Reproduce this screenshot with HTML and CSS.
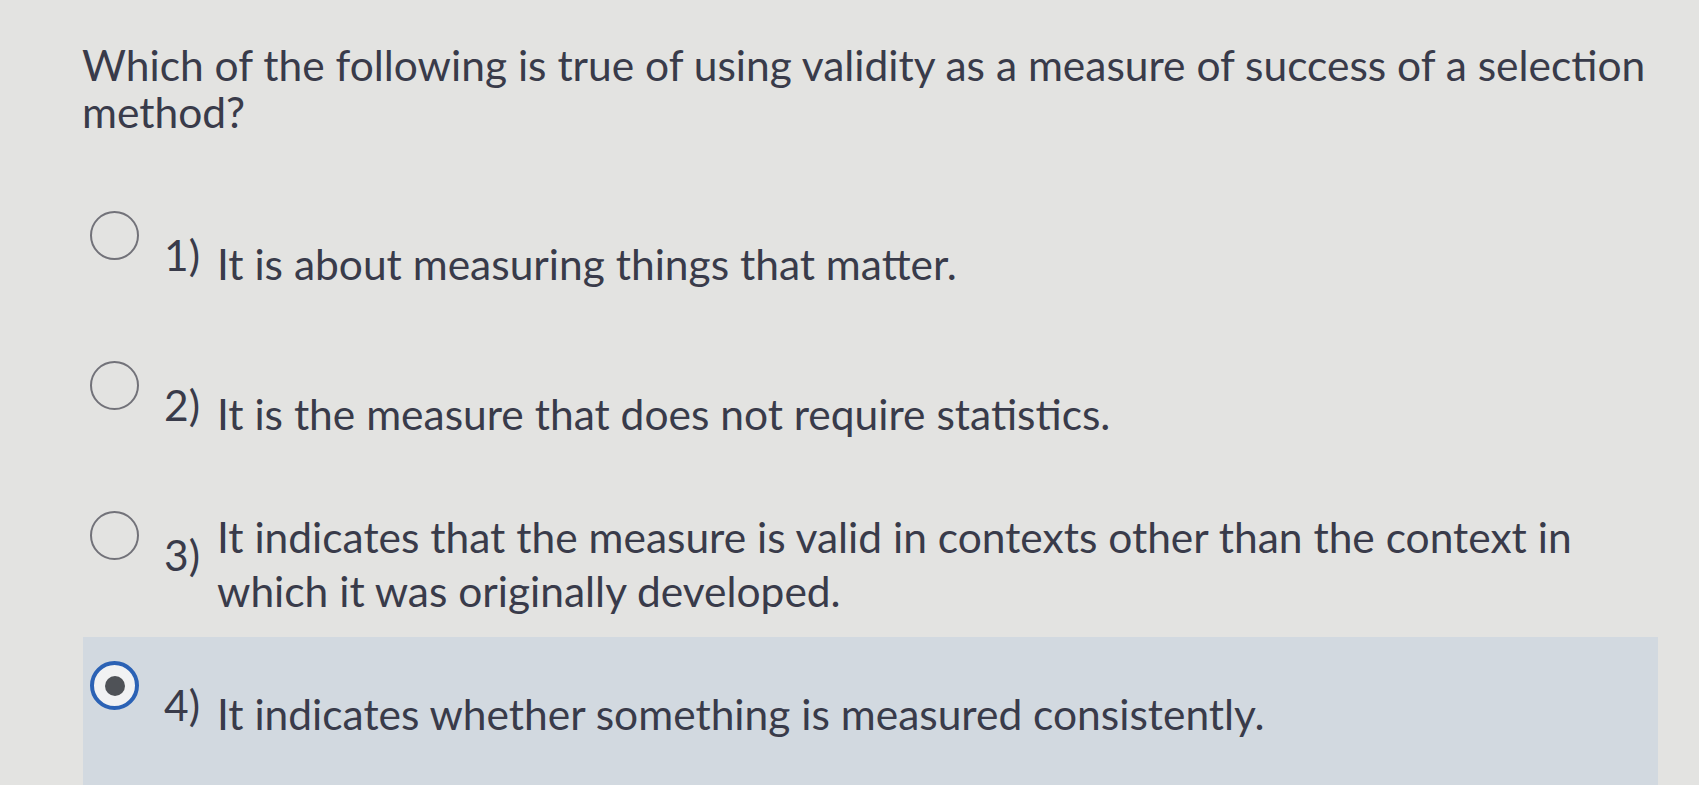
FILE: index.html
```html
<!DOCTYPE html>
<html lang="en">
<head>
    <meta charset="UTF-8">
    <meta name="viewport" content="width=device-width, initial-scale=1.0">
    <title>Quiz Question</title>
    <link rel="stylesheet" href="styles.css">
</head>
<body>
    <div class="quiz">
        <div class="question">Which of the following is true of using validity as a measure of success of a selection method?</div>
        <div class="answers">
            <label class="answer">
                <span class="radio"></span>
                <span class="num">1)</span>
                <span class="text">It is about measuring things that matter.</span>
            </label>
            <label class="answer">
                <span class="radio"></span>
                <span class="num">2)</span>
                <span class="text">It is the measure that does not require statistics.</span>
            </label>
            <label class="answer">
                <span class="radio"></span>
                <span class="num">3)</span>
                <span class="text">It indicates that the measure is valid in contexts other than the context in which it was originally developed.</span>
            </label>
            <label class="answer selected">
                <span class="radio"></span>
                <span class="num">4)</span>
                <span class="text">It indicates whether something is measured consistently.</span>
            </label>
        </div>
    </div>
</body>
</html>
```

FILE: styles.css
```css
body {
    margin: 0;
    background-color: #e3e3e1;
    font-family: Lato, "Open Sans", sans-serif;
    color: #393b4a;
    overflow: hidden;
}

.quiz {
    padding: 0 20px 0 82px;
}

.question {
    font-size: 42.5px;
    line-height: 47px;
    padding-top: 41px;
}

.answers {
    margin-top: 52px;
    margin-right: 21px;
}

.answer {
    display: flex;
    align-items: center;
    min-height: 150px;
    padding-left: 7px;
    margin-left: 1px;
    font-size: 42.5px;
    line-height: 54px;
}

.answer.selected {
    background-color: #d2d9e0;
}

.radio {
    flex: none;
    align-self: flex-start;
    margin-top: 24px;
    width: 49px;
    height: 49px;
    box-sizing: border-box;
    border: 2.5px solid #727279;
    border-radius: 50%;
    display: flex;
    justify-content: center;
    align-items: center;
}

.answer.selected .radio {
    border: 4px solid #2b62b5;
    background-color: #f1f2f3;
}

.answer.selected .radio::after {
    content: "";
    width: 20px;
    height: 20px;
    border-radius: 50%;
    background-color: #4f5257;
}

.num {
    flex: none;
    width: 53px;
    margin-left: 25px;
    padding-bottom: 14px;
}

.text {
    flex: 1;
    padding-top: 4px;
    padding-right: 18px;
}
```
